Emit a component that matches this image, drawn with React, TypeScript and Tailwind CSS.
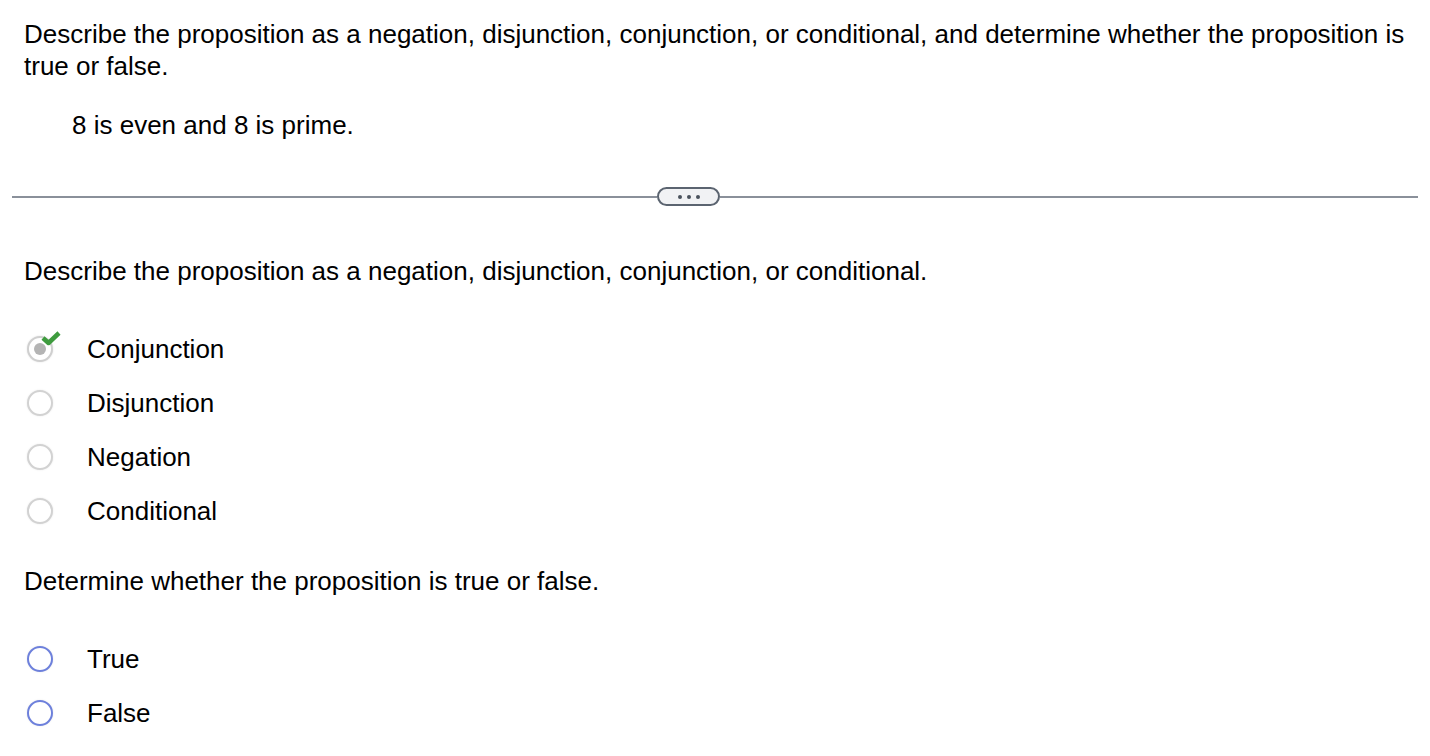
const font = { fontFamily: '"Liberation Sans", Arial, Helvetica, sans-serif' };

type Kind = "gray" | "blue" | "checked";

const Radio = ({ kind }: { kind: Kind }) => {
  if (kind === "checked") {
    return (
      <span className="relative flex h-[26px] w-[26px] items-center justify-center">
        <span className="flex h-[26px] w-[26px] items-center justify-center rounded-full border-[2.5px] border-[#cfcfcf] bg-white shadow-[0_0_2px_rgba(0,0,0,0.12)]">
          <span className="h-[12px] w-[12px] rounded-full bg-[#b4b4b4]" />
        </span>
        <svg className="absolute -right-[9px] -top-[6px]" width="22" height="18" viewBox="0 0 22 18">
          <path d="M3 8 L8.5 13 L19 3" fill="none" stroke="#3e9b3e" strokeWidth="4.5" strokeLinejoin="round" />
        </svg>
      </span>
    );
  }
  const border = kind === "blue" ? "border-[#6d80dc]" : "border-[#d2d2d2]";
  return (
    <span
      className={`block h-[26px] w-[26px] rounded-full border-[2.5px] bg-white shadow-[0_0_2px_rgba(0,0,0,0.1)] ${border}`}
    />
  );
};

const Option = ({ label, kind }: { label: string; kind: Kind }) => (
  <div className="flex h-[54px] items-center">
    <div className="flex w-[63px] pl-[3px]">
      <Radio kind={kind} />
    </div>
    <span>{label}</span>
  </div>
);

export default function App() {
  return (
    <div className="min-h-screen bg-white text-[26px] leading-8 text-black" style={font}>
      <div className="px-6 pt-[18px]">
        <p className="w-[1400px]">
          Describe the proposition as a negation, disjunction, conjunction, or conditional, and determine whether the
          proposition is true or false.
        </p>
        <p className="mt-[27px] pl-12">8 is even and 8 is prime.</p>
      </div>

      {/* separator with expand button */}
      <div className="mt-[46px] flex items-center px-3">
        <div className="h-[2px] w-[645px] bg-[#8a909a]" />
        <button className="flex h-[19px] w-[63px] items-center justify-center gap-[5px] rounded-full border-2 border-[#5b6470] bg-[#f1f2f4]">
          <span className="h-[4px] w-[4px] rounded-full bg-[#4a525c]" />
          <span className="h-[4px] w-[4px] rounded-full bg-[#4a525c]" />
          <span className="h-[4px] w-[4px] rounded-full bg-[#4a525c]" />
        </button>
        <div className="h-[2px] flex-1 bg-[#8a909a]" />
      </div>

      <div className="px-6">
        <p className="mt-[49px]">Describe the proposition as a negation, disjunction, conjunction, or conditional.</p>
        <div className="mt-[35px]">
          <Option label="Conjunction" kind="checked" />
          <Option label="Disjunction" kind="gray" />
          <Option label="Negation" kind="gray" />
          <Option label="Conditional" kind="gray" />
        </div>
        <p className="mt-[27px]">Determine whether the proposition is true or false.</p>
        <div className="mt-[35px]">
          <Option label="True" kind="blue" />
          <Option label="False" kind="blue" />
        </div>
      </div>
    </div>
  );
}
